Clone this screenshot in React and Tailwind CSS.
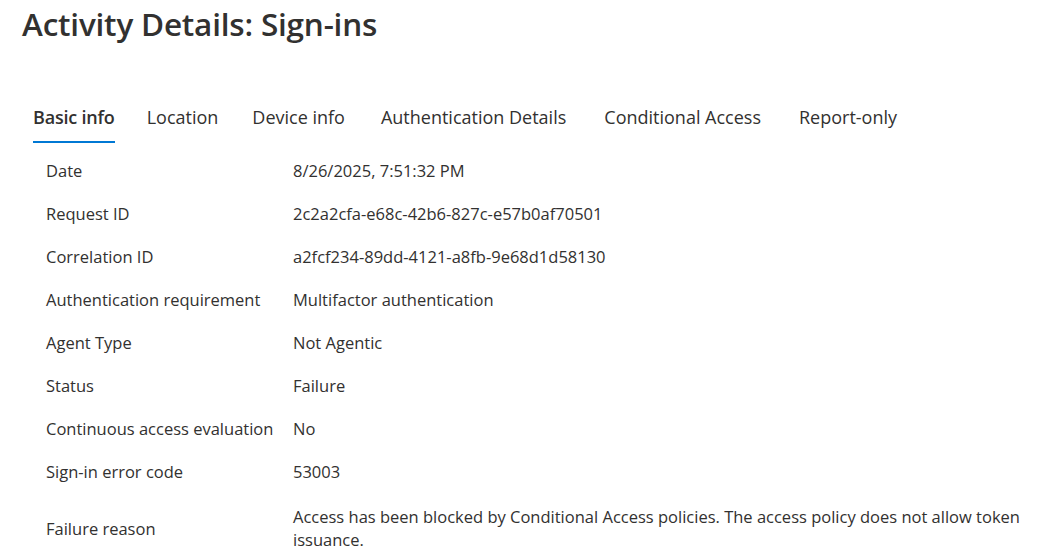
const tabs = [
  { label: 'Basic info', cls: 'ml-0' },
  { label: 'Location', cls: 'ml-[32px]' },
  { label: 'Device info', cls: 'ml-[34px]' },
  { label: 'Authentication Details', cls: 'ml-[36px]' },
  { label: 'Conditional Access', cls: 'ml-[38px]' },
  { label: 'Report-only', cls: 'ml-[38px]' },
]

const rows = [
  ['Date', '8/26/2025, 7:51:32 PM'],
  ['Request ID', '2c2a2cfa-e68c-42b6-827c-e57b0af70501'],
  ['Correlation ID', 'a2fcf234-89dd-4121-a8fb-9e68d1d58130'],
  ['Authentication requirement', 'Multifactor authentication'],
  ['Agent Type', 'Not Agentic'],
  ['Status', 'Failure'],
  ['Continuous access evaluation', 'No'],
  ['Sign-in error code', '53003'],
]

export default function App() {
  return (
    <div className="min-h-screen bg-white text-[#323130] font-['Segoe_UI','Open_Sans',sans-serif]">
      <div className="pl-[22px] pr-[2px] pt-[4px]">
        <h1 className="text-[31.5px] leading-[40px] font-semibold tracking-[-0.2px]">
          Activity Details: Sign-ins
        </h1>

        <nav className="mt-[60px] ml-[11px] flex items-end">
          {tabs.map((t, i) => (
            <button
              key={t.label}
              className={`relative ${t.cls} pb-[14px] text-[18px] leading-[26px] ${
                i === 0 ? 'font-semibold tracking-[-0.2px]' : 'font-normal'
              }`}
            >
              {t.label}
              {i === 0 && (
                <span className="absolute left-0 right-0 bottom-[1px] h-[2px] bg-[#0078d4]" />
              )}
            </button>
          ))}
        </nav>

        <div className="mt-[6px] ml-[24px] text-[16.5px]">
          {rows.map(([label, value]) => (
            <div key={label} className="grid grid-cols-[247px_1fr] h-[43px] items-center">
              <div>{label}</div>
              <div>{value}</div>
            </div>
          ))}
          <div className="grid grid-cols-[247px_1fr] items-center py-[11px] leading-[23px]">
            <div>Failure reason</div>
            <div>
              Access has been blocked by Conditional Access policies. The access policy does not allow token
              issuance.
            </div>
          </div>
        </div>
      </div>
    </div>
  )
}
